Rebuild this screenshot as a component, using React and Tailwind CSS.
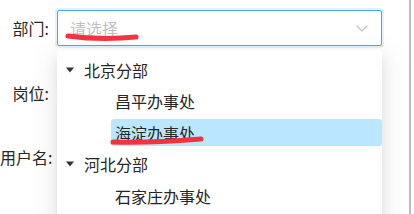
const treeData = [
  {
    title: "北京分部",
    children: [{ title: "昌平办事处" }, { title: "海淀办事处", selected: true }],
  },
  {
    title: "河北分部",
    children: [{ title: "石家庄办事处" }],
  },
];

const fields = ["岗位", "用户名", "密码"];

function Caret() {
  return (
    <svg width="10" height="6" viewBox="0 0 10 6" className="shrink-0">
      <path d="M1 0.5 H9 L5 5.5 Z" fill="#333" />
    </svg>
  );
}

function TreeRow({ title, level, selected }) {
  return (
    <div className="flex items-center h-[27px]">
      {level === 0 ? (
        <div className="w-[23px] flex justify-end pr-[5px]">
          <Caret />
        </div>
      ) : (
        <div className="w-[54px]" />
      )}
      <div
        className={`h-full flex items-center px-[4px] rounded-[3px] ${
          selected ? "bg-[#bae7ff] flex-1" : ""
        }`}
      >
        {title}
      </div>
    </div>
  );
}

export default function App() {
  return (
    <div
      className="relative w-[414px] h-[214px] overflow-hidden bg-white flex text-[16px] text-[#262626]"
      style={{ fontFamily: '"Noto Sans CJK SC", "Noto Sans", sans-serif' }}
    >
      <div className="relative w-[409px] h-full">
        {/* form rows */}
        <div className="flex flex-col gap-[28.5px] pt-[10px]">
          <div className="flex items-center h-[36px]">
            <div className="w-[49px] text-right whitespace-nowrap">部门:</div>
            <div className="ml-[8px] w-[325px] h-[36px] border border-[#40a9ff] rounded-[2px] flex items-center pl-[12px] pr-[13px] shadow-[0_0_0_2px_rgba(24,144,255,0.12)]">
              <span className="text-[#bfbfbf] flex-1">请选择</span>
              <svg width="12" height="7" viewBox="0 0 12 7">
                <path d="M0.5 0.5 L6 6 L11.5 0.5" fill="none" stroke="#bfbfbf" strokeWidth="1.2" />
              </svg>
            </div>
          </div>
          {fields.map((f) => (
            <div key={f} className="flex items-center h-[36px]">
              <div className="w-[49px] text-right whitespace-nowrap">{f}:</div>
              <div className="ml-[8px] w-[325px] h-[36px] border border-[#d9d9d9] rounded-[2px]" />
            </div>
          ))}
        </div>

        {/* tree select dropdown */}
        <div className="absolute left-[57px] top-[50px] w-[325px] h-[200px] bg-white rounded-[2px] pt-[6px] shadow-[0_3px_6px_-4px_rgba(0,0,0,0.12),0_6px_16px_0_rgba(0,0,0,0.08),0_9px_28px_8px_rgba(0,0,0,0.05)]">
          <div className="flex flex-col gap-[4.5px]">
            {treeData.map((node) => (
              <div key={node.title} className="flex flex-col gap-[4.5px]">
                <TreeRow title={node.title} level={0} />
                {node.children.map((c) => (
                  <TreeRow key={c.title} title={c.title} level={1} selected={c.selected} />
                ))}
              </div>
            ))}
          </div>
        </div>

        {/* red annotation strokes */}
        <svg className="absolute left-0 top-0 pointer-events-none" width="409" height="214">
          <path d="M68 36 C90 39, 115 39, 136 37" fill="none" stroke="#f5333f" strokeWidth="5" strokeLinecap="round" />
          <path d="M113 142 C140 143, 175 141, 201 139" fill="none" stroke="#f5333f" strokeWidth="5" strokeLinecap="round" />
        </svg>
      </div>
      <div className="w-[2px] h-full bg-[#bdbdbd]" />
      <div className="flex-1" />
    </div>
  );
}
